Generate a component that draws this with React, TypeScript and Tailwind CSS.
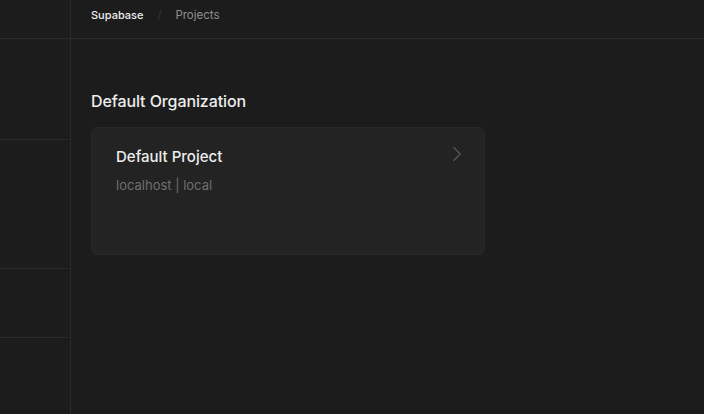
import { ChevronRight } from 'lucide-react';

export default function App() {
  return (
    <div className="flex h-[414px] w-[704px] overflow-hidden bg-[#1c1c1c] font-['Inter',sans-serif] text-[#ededed]">
      {/* sidebar */}
      <aside className="flex w-[71px] shrink-0 flex-col border-r border-[#2a2a2a]">
        <div className="h-[39px] shrink-0 border-b border-[#2a2a2a]" />
        <div className="h-[101px] shrink-0 border-b border-[#2a2a2a]" />
        <div className="h-[129px] shrink-0 border-b border-[#2a2a2a]" />
        <div className="h-[69px] shrink-0 border-b border-[#2a2a2a]" />
        <div className="flex-1" />
      </aside>

      <main className="flex flex-1 flex-col">
        <header className="flex h-[39px] shrink-0 items-start border-b border-[#2a2a2a] pl-5 pt-[9px] text-[11px] leading-[13px]">
          <span className="font-medium text-[#ededed]">Supabase</span>
          <span className="ml-[14px] mr-[14px] text-[#3a3a3a]">/</span>
          <span className="text-[11.5px] text-[#8f8f8f]">Projects</span>
        </header>

        <section className="px-5 pt-[52px]">
          <h2 className="text-[16px] leading-5 font-medium tracking-[-0.1px] text-[#ededed]">
            Default Organization
          </h2>
          <div className="mt-[16px] h-[128px] w-[394px] rounded-md border border-[#282828] bg-[#232323] px-6 pt-[19px]">
            <div className="flex items-start justify-between">
              <div>
                <div className="text-[15px] leading-5 font-medium text-[#ededed]">Default Project</div>
                <div className="mt-[8px] text-[13px] leading-5 text-[#6f6f6f]">localhost | local</div>
              </div>
              <ChevronRight size={26} strokeWidth={1} className="mr-[-10px] mt-[-6px] text-[#5a5a5a]" />
            </div>
          </div>
        </section>
      </main>
    </div>
  );
}
